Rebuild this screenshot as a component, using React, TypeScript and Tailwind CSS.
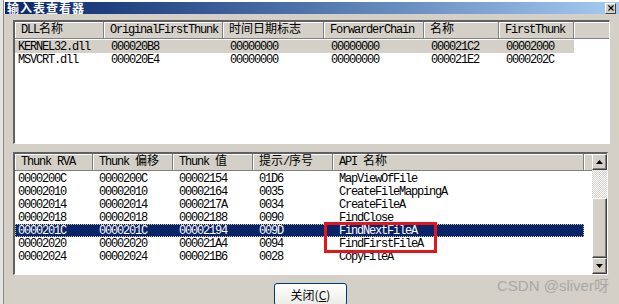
import React from 'react';

const FONT = "font-['Liberation_Mono','Noto_Sans_CJK_SC',monospace]";

const upperCols = [89, 119, 101, 100, 75, 75];
const upperHeads = ['DLL名称', 'OriginalFirstThunk', '时间日期标志', 'ForwarderChain', '名称', 'FirstThunk'];
const upperRows = [
  ['KERNEL32.dll', '000020B8', '00000000', '00000000', '000021C2', '00002000'],
  ['MSVCRT.dll', '000020E4', '00000000', '00000000', '000021E2', '0000202C'],
];

const lowerCols = [78, 80, 80, 80, 251];
const lowerHeads = ['Thunk RVA', 'Thunk 偏移', 'Thunk 值', '提示/序号', 'API 名称'];
const lowerRows = [
  ['0000200C', '0000200C', '00002154', '01D6', 'MapViewOfFile'],
  ['00002010', '00002010', '00002164', '0035', 'CreateFileMappingA'],
  ['00002014', '00002014', '0000217A', '0034', 'CreateFileA'],
  ['00002018', '00002018', '00002188', '0090', 'FindClose'],
  ['0000201C', '0000201C', '00002194', '009D', 'FindNextFileA'],
  ['00002020', '00002020', '000021A4', '0094', 'FindFirstFileA'],
  ['00002024', '00002024', '000021B6', '0028', 'CopyFileA'],
];

// latin glyphs squeezed to 6px, CJK left at full width
function Txt({ s }: { s: string }) {
  const parts = s.match(/[\u2e80-\uffff]+|[^\u2e80-\uffff]+/g) || [];
  return (
    <span className="whitespace-pre">
      {parts.map((p, i) =>
        /[\u2e80-\uffff]/.test(p) ? (
          <span key={i} className="tracking-normal">{p}</span>
        ) : (
          <span key={i} className="tracking-[-1.2px]">{p}</span>
        )
      )}
    </span>
  );
}

function HeaderCell({ w, label }: { w: number; label?: string }) {
  return (
    <div
      style={{ width: w }}
      className="h-full shrink-0 flex items-center pl-[6px] pt-[1px] bg-[#d4d0c8] border-r border-b border-[#808080] shadow-[inset_1px_1px_0_#ffffff] whitespace-nowrap overflow-hidden"
    >
      {label && <Txt s={label} />}
    </div>
  );
}

function Arrow({ up }: { up?: boolean }) {
  return (
    <div className="h-[16px] w-full bg-[#d4d0c8] border border-t-white border-l-white border-r-[#404040] border-b-[#404040] shadow-[inset_-1px_-1px_0_#808080] flex items-center justify-center">
      <svg width="7" height="4" viewBox="0 0 7 4">
        {up ? <polygon points="3.5,0 7,4 0,4" fill="#000" /> : <polygon points="0,0 7,0 3.5,4" fill="#000" />}
      </svg>
    </div>
  );
}

export default function App() {
  return (
    <div className={`relative w-[619px] h-[304px] overflow-hidden bg-white flex ${FONT} text-[12px] leading-[13px] text-black`}>
      <div className="w-[3px] bg-[#e6e4de]" />
      <div className="w-[1px] bg-[#8a8a8a]" />
      <div className="flex-1 flex flex-col pt-[2px]">
        {/* title bar */}
        <div className="ml-[1px] h-[15px] flex items-center justify-between bg-gradient-to-r from-[#0a246a] to-[#a6caf0]">
          <span className="pl-[2px] text-white font-bold text-[12px] tracking-[1px] font-['Noto_Sans_CJK_SC',sans-serif] leading-none">
            输入表查看器
          </span>
          <div className="mr-[3px] w-[11px] h-[11px] bg-[#d4d0c8] border border-t-white border-l-white border-r-[#404040] border-b-[#404040] flex items-center justify-center">
            <svg width="6" height="6" viewBox="0 0 6 6">
              <path d="M0.5 0.5 L5.5 5.5 M5.5 0.5 L0.5 5.5" stroke="#000" strokeWidth="1.3" />
            </svg>
          </div>
        </div>

        <div className="flex-1 bg-[#d4d0c8] flex flex-col pl-[9px] pt-[6px]">
          {/* upper list */}
          <div className="w-[597px] h-[124px] bg-white border-t-2 border-l-2 border-t-[#606060] border-l-[#606060] border-r border-b border-r-white border-b-white overflow-hidden">
            <div className="h-[17px] flex">
              {upperCols.map((w, i) => (
                <HeaderCell key={i} w={w} label={upperHeads[i]} />
              ))}
              <HeaderCell w={40} />
            </div>
            <div className="pt-[1px]">
              {upperRows.map((r, ri) => (
                <div key={ri} className={`h-[13px] flex w-[559px] ${ri === 0 ? 'bg-[#d4d0c8]' : ''}`}>
                  {r.map((c, ci) => (
                    <div key={ci} style={{ width: upperCols[ci] }} className={`shrink-0 whitespace-nowrap pt-[1px] ${ci === 0 ? 'pl-[3px]' : 'pl-[7px]'}`}>
                      <Txt s={c} />
                    </div>
                  ))}
                </div>
              ))}
            </div>
          </div>

          {/* lower list */}
          <div className="mt-[8px] w-[595px] h-[123px] bg-white border-t-2 border-l-2 border-t-[#606060] border-l-[#606060] border-r border-b border-r-white border-b-white flex overflow-hidden">
            <div className="flex-1 flex flex-col">
              <div className="h-[17px] flex">
                {lowerCols.map((w, i) => (
                  <HeaderCell key={i} w={w} label={lowerHeads[i]} />
                ))}
                <div className="flex-1 h-full bg-[#d4d0c8] border-b border-[#808080] shadow-[inset_1px_1px_0_#ffffff]" />
              </div>
              <div className="pt-[1px]">
                {lowerRows.map((r, ri) => {
                  const sel = ri === 4;
                  return (
                    <div
                      key={ri}
                      className={`h-[13px] flex w-[569px] ${sel ? 'bg-[#0a246a] outline outline-1 outline-dotted outline-offset-[-1px] outline-[#d9c98a]' : ''}`}
                    >
                      {r.map((c, ci) => (
                        <div
                          key={ci}
                          style={{ width: lowerCols[ci] }}
                          className={`shrink-0 whitespace-nowrap pt-[1px] ${ci === 0 ? 'pl-[3px]' : 'pl-[6px]'} ${sel ? 'text-white' : 'text-black'}`}
                        >
                          <Txt s={c} />
                        </div>
                      ))}
                    </div>
                  );
                })}
              </div>
            </div>
            {/* scrollbar */}
            <div className="w-[15px] flex flex-col">
              <Arrow up />
              <div className="h-[28px] bg-[repeating-conic-gradient(#d4d0c8_0_25%,#ffffff_0_50%)] bg-[length:2px_2px]" />
              <div className="flex-1 bg-[#d4d0c8] border border-t-white border-l-white border-r-[#404040] border-b-[#404040] shadow-[inset_-1px_-1px_0_#808080]" />
              <Arrow />
            </div>
          </div>

          {/* button */}
          <div className="mt-[8px] flex pl-[261px]">
            <button className="w-[73px] h-[23px] rounded-[3px] border border-[#003c74] bg-gradient-to-b from-white to-[#ecebe6] flex items-center justify-center font-['Noto_Sans_CJK_SC',sans-serif] text-[12px]">
              关闭(<span className="underline">C</span>)
            </button>
          </div>
        </div>
      </div>

      {/* annotation */}
      <div className="absolute left-[324px] top-[222px] w-[113px] h-[31px] border-[3px] border-[#e5161b]" />
      {/* watermark */}
      <div className="absolute left-[497px] top-[279px] text-[15px] text-[#a9a8a4] font-['Liberation_Sans','Noto_Sans_CJK_SC',sans-serif] whitespace-nowrap">
        CSDN @sliver呀
      </div>
    </div>
  );
}
